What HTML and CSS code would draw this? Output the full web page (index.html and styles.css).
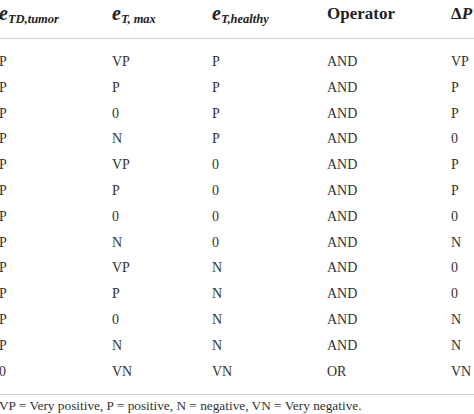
FILE: index.html
```html
<!DOCTYPE html>
<html>
<head>
<meta charset="utf-8">
<link rel="stylesheet" href="styles.css">
</head>
<body>
<div class="wrap">
<table class="tbl">
  <colgroup>
    <col class="c1"><col class="c2"><col class="c3"><col class="c4"><col class="c5">
  </colgroup>
  <thead>
    <tr>
      <th><span class="e">e</span><sub>TD,tumor</sub></th>
      <th><span class="e">e</span><sub>T, max</sub></th>
      <th><span class="e">e</span><sub>T,healthy</sub></th>
      <th>Operator</th>
      <th><span class="dp">Δ<i>P</i></span></th>
    </tr>
  </thead>
  <tbody>
    <tr><td>P</td><td>VP</td><td>P</td><td>AND</td><td>VP</td></tr>
    <tr><td>P</td><td>P</td><td>P</td><td>AND</td><td>P</td></tr>
    <tr><td>P</td><td>0</td><td>P</td><td>AND</td><td>P</td></tr>
    <tr><td>P</td><td>N</td><td>P</td><td>AND</td><td>0</td></tr>
    <tr><td>P</td><td>VP</td><td>0</td><td>AND</td><td>P</td></tr>
    <tr><td>P</td><td>P</td><td>0</td><td>AND</td><td>P</td></tr>
    <tr><td>P</td><td>0</td><td>0</td><td>AND</td><td>0</td></tr>
    <tr><td>P</td><td>N</td><td>0</td><td>AND</td><td>N</td></tr>
    <tr><td>P</td><td>VP</td><td>N</td><td>AND</td><td>0</td></tr>
    <tr><td>P</td><td>P</td><td>N</td><td>AND</td><td>0</td></tr>
    <tr><td>P</td><td>0</td><td>N</td><td>AND</td><td>N</td></tr>
    <tr><td>P</td><td>N</td><td>N</td><td>AND</td><td>N</td></tr>
    <tr><td>0</td><td>VN</td><td>VN</td><td>OR</td><td>VN</td></tr>
  </tbody>
</table>
<p class="note">VP = Very positive, P = positive, N = negative, VN = Very negative.</p>
</div>
</body>
</html>
```
FILE: styles.css
```css
html, body {
  margin: 0;
  padding: 0;
  background: #ffffff;
  overflow: hidden;
}
.wrap {
  width: 475px;
  margin-left: -1px;
  overflow: hidden;
  font-family: "Liberation Serif", "Times New Roman", serif;
  color: #333333;
}
.tbl {
  border-collapse: collapse;
  width: 475px;
  table-layout: fixed;
}
.c1 { width: 113px; }
.c2 { width: 100px; }
.c3 { width: 115px; }
.c4 { width: 124px; }
.c5 { width: 23px; }
.tbl th {
  text-align: left;
  font-weight: bold;
  font-size: 17px;
  line-height: 20px;
  padding: 2.5px 0 13px 0;
  color: #222222;
  border-bottom: 1.5px solid #cfcfcf;
  white-space: nowrap;
  overflow: hidden;
}
.tbl th .e {
  font-style: italic;
  font-size: 20px;
}
.tbl th sub {
  font-style: italic;
  font-size: 12.5px;
  line-height: 0;
  vertical-align: -3px;
}
.tbl th .dp i {
  font-style: italic;
}
.tbl td {
  font-size: 14px;
  line-height: 25.8px;
  padding: 0;
  white-space: nowrap;
  overflow: hidden;
}
.tbl tbody tr:first-child td {
  padding-top: 10.5px;
}
.tbl tbody tr:last-child td {
  padding-bottom: 9.5px;
  border-bottom: 1.5px solid #cfcfcf;
}
.note {
  margin: 3px 0 0 0;
  font-size: 13.3px;
  line-height: 16px;
  white-space: nowrap;
}
```
